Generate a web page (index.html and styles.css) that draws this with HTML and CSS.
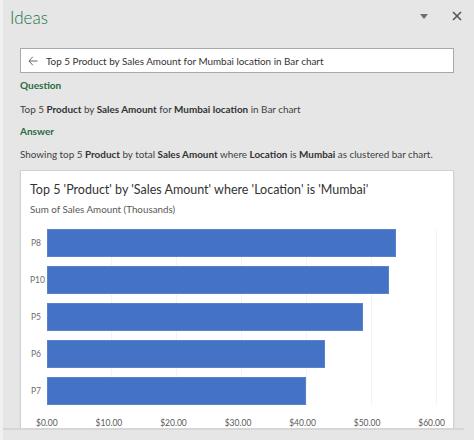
FILE: index.html
```html
<!DOCTYPE html>
<html lang="en">
<head>
    <meta charset="UTF-8">
    <title>Ideas</title>
    <link rel="stylesheet" href="styles.css">
</head>
<body>
    <div class="panel">
        <div class="header">
            <h1 class="title">Ideas</h1>
            <div class="header-icons">
                <svg class="icon-caret" width="8" height="5" viewBox="0 0 8 5"><path d="M0 0 L8 0 L4 5 Z" fill="#6d6d6d"/></svg>
                <svg class="icon-close" width="10" height="10" viewBox="0 0 10 10"><path d="M1 1 L9 9 M9 1 L1 9" stroke="#555" stroke-width="1.6"/></svg>
            </div>
        </div>

        <div class="pane">
            <div class="search">
                <svg class="back" width="10" height="10" viewBox="0 0 10 10"><path d="M9.5 5 H1 M4.8 0.8 L0.9 5 L4.8 9.2" fill="none" stroke="#666" stroke-width="1"/></svg>
                <span>Top 5 Product by Sales Amount for Mumbai location in Bar chart</span>
            </div>

            <div class="label">Question</div>
            <p class="text">Top 5 <b>Product</b> by <b>Sales Amount</b> for <b>Mumbai location</b> in Bar chart</p>
            <div class="label answer">Answer</div>
            <p class="text answer-text">Showing top 5 <b>Product</b> by total <b>Sales Amount</b> where <b>Location</b> is <b>Mumbai</b> as clustered bar chart.</p>

            <div class="card">
                <div class="chart-title">Top 5 'Product' by 'Sales Amount' where 'Location' is 'Mumbai'</div>
                <div class="chart-sub">Sum of Sales Amount (Thousands)</div>

                <div class="chart">
                    <div class="cats">
                        <span>P8</span>
                        <span>P10</span>
                        <span>P5</span>
                        <span>P6</span>
                        <span>P7</span>
                    </div>
                    <div class="plot">
                        <div class="bar" style="width: 89.5%"></div>
                        <div class="bar" style="width: 87.7%"></div>
                        <div class="bar" style="width: 81%"></div>
                        <div class="bar" style="width: 71.3%"></div>
                        <div class="bar" style="width: 66.4%"></div>
                    </div>
                </div>
                <div class="axis">
                    <span>$0.00</span>
                    <span>$10.00</span>
                    <span>$20.00</span>
                    <span>$30.00</span>
                    <span>$40.00</span>
                    <span>$50.00</span>
                    <span>$60.00</span>
                </div>
            </div>
        </div>
    </div>
</body>
</html>
```

FILE: styles.css
```css
body {
    margin: 0;
    background-color: #e6e6e6;
    font-family: Lato, 'Open Sans', sans-serif;
    color: #333;
}

.panel {
    height: 440px;
    border-left: 3px solid #f0f0f0;
    box-sizing: border-box;
}

.header {
    display: flex;
    justify-content: space-between;
    align-items: center;
    height: 40px;
    padding: 0 12px 0 7px;
}

.title {
    margin: -6px 0 0;
    font-size: 17px;
    font-weight: 300;
    color: #217346;
}

.header-icons {
    display: flex;
    align-items: center;
    gap: 24px;
    margin-top: -8px;
}

.pane {
    height: 388px;
    margin-right: 10px;
    padding: 0 10px 0 17px;
    overflow: hidden;
    border-bottom: 2px solid #d6d6d6;
}

.search {
    display: flex;
    align-items: center;
    gap: 8px;
    box-sizing: border-box;
    height: 25px;
    margin-top: 8px;
    padding-left: 7px;
    background-color: #fff;
    border: 1px solid #a9a9a9;
    font-size: 9.9px;
    color: #333;
}

.label {
    margin-top: 4px;
    font-size: 10px;
    font-weight: bold;
    color: #2b6b41;
    line-height: 17px;
}

.label.answer {
    margin-top: 6px;
}

.text {
    margin: 7px 0 0;
    font-size: 9.9px;
    line-height: 16px;
    color: #404040;
    white-space: nowrap;
}

.text.answer-text {
    margin-top: 6px;
}

.text b {
    font-weight: bold;
    color: #333;
}

.card {
    margin-top: 8px;
    background-color: #fff;
    border: 1px solid #d2d2d2;
    box-shadow: 0 1px 2px rgba(0, 0, 0, 0.08);
    padding: 9px 16px 20px 9px;
}

.chart-title {
    font-size: 12.5px;
    color: #333;
    line-height: 20px;
}

.chart-sub {
    font-size: 9.8px;
    color: #595959;
    line-height: 16px;
    margin-top: 1px;
}

.chart {
    display: flex;
    margin-top: 12px;
}

.cats {
    display: flex;
    flex-direction: column;
    gap: 9px;
    width: 11px;
    padding-right: 6px;
    text-align: right;
    font-size: 8.5px;
    color: #6d6d6d;
}

.cats span {
    height: 28px;
    line-height: 28px;
}

.plot {
    flex: 1;
    display: flex;
    flex-direction: column;
    gap: 9px;
    background-image: repeating-linear-gradient(to right, transparent 0, transparent 64px, #f3f3f3 64px, #f3f3f3 65px);
}

.bar {
    height: 28px;
    background-color: #4472c4;
    box-shadow: inset 0 0 0 1px #5a82c9;
}

.axis {
    display: flex;
    justify-content: space-between;
    margin: 12px -8px 0 6px;
    font-size: 8.5px;
    line-height: 12px;
    color: #595959;
}
```
